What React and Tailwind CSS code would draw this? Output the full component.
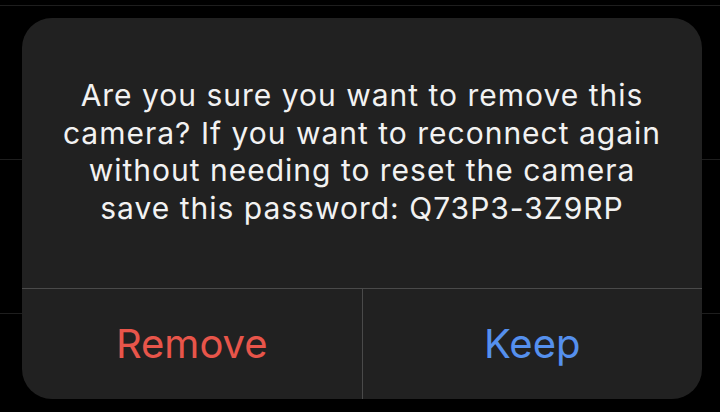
export default function App() {
  return (
    <div className="relative w-[720px] h-[412px] overflow-hidden bg-black" style={{ fontFamily: 'Inter, "Noto Sans", sans-serif' }}>
      <div className="h-[5px]" />
      <div className="h-[154px] border-t border-[#1e1e1e]" />
      <div className="h-[154px] border-t border-[#1e1e1e]" />
      <div className="h-[99px] border-t border-[#1e1e1e]" />

      <div className="absolute left-[22px] top-[18px] w-[680px] h-[381px] rounded-[30px] bg-[#212121] flex flex-col overflow-hidden">
        <div className="h-[270px] flex items-center justify-center pb-[2px]">
          <p className="text-center text-[30px] leading-[37.5px] text-[#f2f2f2] tracking-[1px] whitespace-nowrap">
            Are you sure you want to remove this<br />
            camera? If you want to reconnect again<br />
            without needing to reset the camera<br />
            save this password: Q73P3-3Z9RP
          </p>
        </div>
        <div className="flex flex-1 border-t border-[#4a4a4a]">
          <button className="flex-1 flex items-center justify-center text-[40px] text-[#e8554a]">Remove</button>
          <div className="w-px bg-[#4a4a4a]" />
          <button className="flex-1 flex items-center justify-center text-[40px] text-[#5590ee]">Keep</button>
        </div>
      </div>
    </div>
  )
}
